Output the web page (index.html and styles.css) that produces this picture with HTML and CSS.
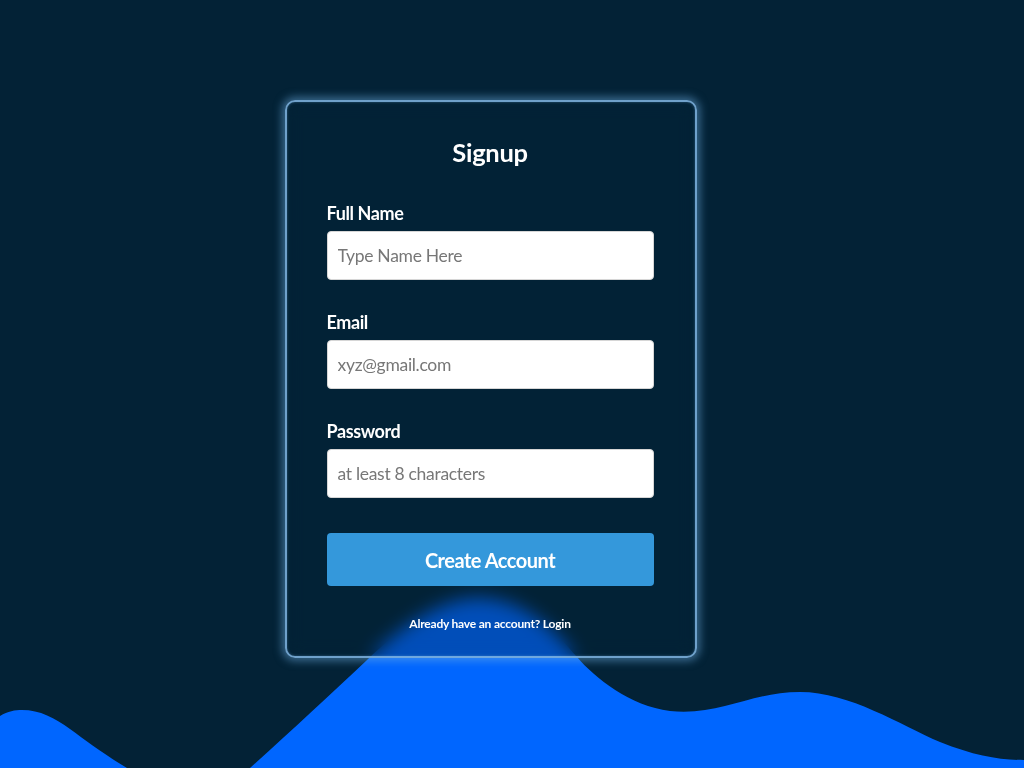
FILE: index.html
```html
<!DOCTYPE html>
<html lang="en">
<head>
<meta charset="utf-8">
<title>Signup</title>
<link rel="stylesheet" href="styles.css">
</head>
<body>
<svg class="waves" viewBox="0 0 1024 768" preserveAspectRatio="none" aria-hidden="true">
  <path d="M0,716 C8,711 15,710 22,710 C40,710 55,718 70,729 C85,740 105,755 127,768 L0,768 Z" fill="#0066ff"/>
  <path d="M250,768 C290,732 330,695 367,660 C400,628 440,598 478,598 C520,598 550,625 577,657 C595,678 630,706 670,711 C720,716 750,692 800,692 C850,692 900,725 940,742 C975,756 1000,760 1024,760 L1024,768 Z" fill="#0066ff"/>
</svg>
<main class="page">
  <form class="card">
    <h1 class="title">Signup</h1>
    <label class="field">
      <span class="label">Full Name</span>
      <input class="input" type="text" placeholder="Type Name Here">
    </label>
    <label class="field">
      <span class="label">Email</span>
      <input class="input" type="email" placeholder="xyz@gmail.com">
    </label>
    <label class="field">
      <span class="label">Password</span>
      <input class="input" type="password" placeholder="at least 8 characters">
    </label>
    <button class="btn" type="button">Create Account</button>
    <p class="alt">Already have an account? Login</p>
  </form>
</main>
</body>
</html>
```

FILE: styles.css
```css
* { box-sizing: border-box; }
html, body {
  margin: 0;
  padding: 0;
  height: 100%;
}
body {
  background: #032236;
  font-family: "Lato", "Open Sans", sans-serif;
  color: #fff;
  overflow: hidden;
  position: relative;
}
.waves {
  position: absolute;
  left: 0;
  top: 0;
  width: 1024px;
  height: 768px;
  z-index: 0;
}
.page {
  position: relative;
  z-index: 1;
  display: flex;
  justify-content: center;
  padding-top: 100px;
  padding-right: 43px;
}
.card {
  width: 412px;
  height: 558px;
  padding: 34px 41px 23px 40px;
  border: 2px solid rgba(130, 185, 230, 0.85);
  border-radius: 10px;
  background: rgba(3, 34, 54, 0.35);
  backdrop-filter: blur(9px);
  -webkit-backdrop-filter: blur(9px);
  box-shadow: 0 0 9px 3px rgba(110, 175, 230, 0.5), inset 0 0 3px rgba(110, 175, 230, 0.4);
  display: flex;
  flex-direction: column;
}
.title {
  margin: 0;
  font-size: 25.5px;
  line-height: 32px;
  font-weight: 700;
  text-align: center;
  letter-spacing: -0.3px;
}
.field {
  display: flex;
  flex-direction: column;
  margin-top: 35px;
}
.field + .field { margin-top: 32px; }
.label {
  font-size: 18px;
  line-height: 20px;
  font-weight: 700;
  letter-spacing: -0.4px;
  margin-bottom: 8px;
}
.input {
  height: 49px;
  width: 100%;
  border: 1px solid #d6d6d6;
  border-radius: 4px;
  background: #fff;
  padding: 0 10px;
  font-family: "Lato", "Open Sans", sans-serif;
  font-size: 17.5px;
  color: #333;
  outline: none;
}
.input::placeholder { color: #777; letter-spacing: -0.3px; }
.btn {
  margin-top: 35px;
  height: 53px;
  width: 100%;
  border: none;
  border-radius: 4px;
  background: #3498db;
  color: #fff;
  font-family: "Lato", "Open Sans", sans-serif;
  font-size: 20px;
  font-weight: 700;
  letter-spacing: -0.5px;
}
.alt {
  margin: 30px 0 0;
  font-size: 12px;
  line-height: 16px;
  font-weight: 700;
  text-align: center;
  letter-spacing: -0.2px;
}
```
